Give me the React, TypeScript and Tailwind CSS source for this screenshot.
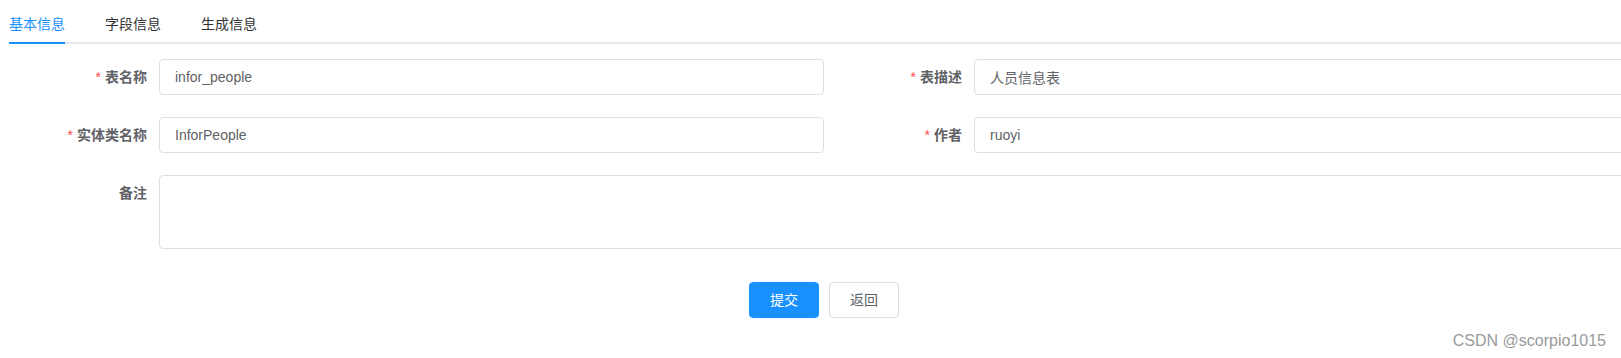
import React from "react";

const font = "font-['Liberation_Sans','Noto_Sans_CJK_SC',sans-serif]";

const tabs = ["基本信息", "字段信息", "生成信息"];

const FormItem: React.FC<{
  label: string;
  required?: boolean;
  children: React.ReactNode;
}> = ({ label, required, children }) => (
  <div className="flex mb-[22px] flex-1">
    <label className="w-[150px] shrink-0 pr-3 h-[36px] leading-[36px] text-right text-[14px] font-bold text-[#606266]">
      {required && <span className="text-[#ff4949] font-normal mr-1">*</span>}
      {label}
    </label>
    <div className="flex-1">{children}</div>
  </div>
);

const Input: React.FC<{ value: string }> = ({ value }) => (
  <input
    readOnly
    value={value}
    className="w-full h-[36px] px-[15px] border border-[#dcdfe6] rounded-[4px] text-[14px] text-[#606266] outline-none bg-white"
  />
);

export default function App() {
  return (
    <div className={`relative w-[1621px] h-[358px] overflow-hidden bg-white ${font}`}>
      <div className="w-[1630px] ml-[9px] pt-[2px]">
        {/* Tabs */}
        <div className="flex border-b-2 border-[#e4e7ed] mb-[15px]">
          {tabs.map((t, i) => (
            <div
              key={t}
              className={`relative h-[40px] pt-[4px] leading-[36px] text-[14px] ${
                i === 0 ? "pr-5 text-[#1890ff]" : "px-5 text-[#303133]"
              }`}
            >
              {t}
              {i === 0 && (
                <span className="absolute left-0 right-5 -bottom-[2px] h-[2px] bg-[#1890ff]" />
              )}
            </div>
          ))}
        </div>

        {/* Form */}
        <div className="flex">
          <FormItem label="表名称" required>
            <Input value="infor_people" />
          </FormItem>
          <FormItem label="表描述" required>
            <Input value="人员信息表" />
          </FormItem>
        </div>
        <div className="flex">
          <FormItem label="实体类名称" required>
            <Input value="InforPeople" />
          </FormItem>
          <FormItem label="作者" required>
            <Input value="ruoyi" />
          </FormItem>
        </div>
        <div className="flex">
          <FormItem label="备注">
            <textarea
              readOnly
              className="block w-full h-[74px] px-[15px] py-[5px] border border-[#dcdfe6] rounded-[4px] text-[14px] text-[#606266] outline-none resize-none"
            />
          </FormItem>
        </div>

        {/* Buttons */}
        <div className="flex justify-center gap-[10px] pt-[11px]">
          <button className="h-[36px] px-5 rounded-[4px] bg-[#1890ff] border border-[#1890ff] text-white text-[14px]">
            提交
          </button>
          <button className="h-[36px] px-5 rounded-[4px] bg-white border border-[#dcdfe6] text-[#606266] text-[14px]">
            返回
          </button>
        </div>
      </div>

      {/* Watermark */}
      <div className="absolute right-[15px] top-[331px] text-[16px] leading-[20px] text-[#9a9a9a]">
        CSDN @scorpio1015
      </div>
    </div>
  );
}
